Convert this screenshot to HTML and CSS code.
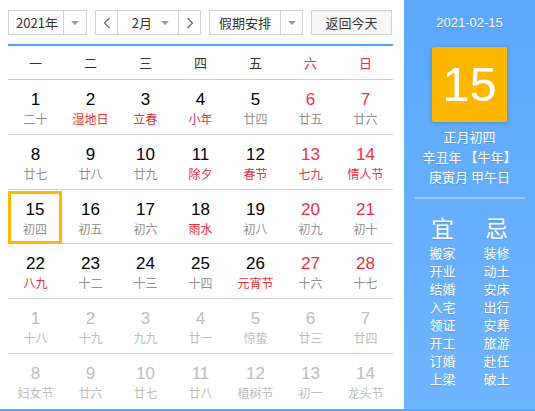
FILE: index.html
```html
<!DOCTYPE html>
<html lang="zh">
<head>
<meta charset="utf-8">
<link rel="stylesheet" href="styles.css">
</head>
<body>
<div class="widget">
  <div class="main">
    <div class="toolbar">
      <div class="select year"><span class="val">2021年</span><span class="drop"><i class="tri"></i></span></div>
      <div class="select month">
        <span class="nav"><svg width="8" height="12" viewBox="0 0 8 12"><path d="M6.5 1 L1.5 6 L6.5 11" fill="none" stroke="#666" stroke-width="1.2"/></svg></span>
        <span class="val">2月</span><span class="mdrop"><i class="tri"></i></span>
        <span class="nav next"><svg width="8" height="12" viewBox="0 0 8 12"><path d="M1.5 1 L6.5 6 L1.5 11" fill="none" stroke="#666" stroke-width="1.2"/></svg></span>
      </div>
      <div class="select holiday"><span class="val">假期安排</span><span class="drop"><i class="tri"></i></span></div>
      <div class="btn">返回今天</div>
    </div>
    <div class="weekhead">
      <span>一</span><span>二</span><span>三</span><span>四</span><span>五</span><span class="red">六</span><span class="red">日</span>
    </div>
    <div class="week">
      <div class="day"><b>1</b><em>二十</em></div>
      <div class="day"><b>2</b><em class="red">湿地日</em></div>
      <div class="day"><b>3</b><em class="red">立春</em></div>
      <div class="day"><b>4</b><em class="red">小年</em></div>
      <div class="day"><b>5</b><em>廿四</em></div>
      <div class="day"><b class="red">6</b><em>廿五</em></div>
      <div class="day"><b class="red">7</b><em>廿六</em></div>
    </div>
    <div class="week">
      <div class="day"><b>8</b><em>廿七</em></div>
      <div class="day"><b>9</b><em>廿八</em></div>
      <div class="day"><b>10</b><em>廿九</em></div>
      <div class="day"><b>11</b><em class="red">除夕</em></div>
      <div class="day"><b>12</b><em class="red">春节</em></div>
      <div class="day"><b class="red">13</b><em class="red">七九</em></div>
      <div class="day"><b class="red">14</b><em class="red">情人节</em></div>
    </div>
    <div class="week">
      <div class="day sel"><b>15</b><em>初四</em></div>
      <div class="day"><b>16</b><em>初五</em></div>
      <div class="day"><b>17</b><em>初六</em></div>
      <div class="day"><b>18</b><em class="red">雨水</em></div>
      <div class="day"><b>19</b><em>初八</em></div>
      <div class="day"><b class="red">20</b><em>初九</em></div>
      <div class="day"><b class="red">21</b><em>初十</em></div>
    </div>
    <div class="week">
      <div class="day"><b>22</b><em class="red">八九</em></div>
      <div class="day"><b>23</b><em>十二</em></div>
      <div class="day"><b>24</b><em>十三</em></div>
      <div class="day"><b>25</b><em>十四</em></div>
      <div class="day"><b>26</b><em class="red">元宵节</em></div>
      <div class="day"><b class="red">27</b><em>十六</em></div>
      <div class="day"><b class="red">28</b><em>十七</em></div>
    </div>
    <div class="week other">
      <div class="day"><b>1</b><em>十八</em></div>
      <div class="day"><b>2</b><em>十九</em></div>
      <div class="day"><b>3</b><em>九九</em></div>
      <div class="day"><b>4</b><em>廿一</em></div>
      <div class="day"><b>5</b><em>惊蛰</em></div>
      <div class="day"><b>6</b><em>廿三</em></div>
      <div class="day"><b>7</b><em>廿四</em></div>
    </div>
    <div class="week other last">
      <div class="day"><b>8</b><em>妇女节</em></div>
      <div class="day"><b>9</b><em>廿六</em></div>
      <div class="day"><b>10</b><em>廿七</em></div>
      <div class="day"><b>11</b><em>廿八</em></div>
      <div class="day"><b>12</b><em>植树节</em></div>
      <div class="day"><b>13</b><em>初一</em></div>
      <div class="day"><b>14</b><em>龙头节</em></div>
    </div>
  </div>
  <div class="panel">
    <div class="pdate">2021-02-15</div>
    <div class="bigday">15</div>
    <div class="lunar">
      <div>正月初四</div>
      <div>辛丑年 【牛年】</div>
      <div>庚寅月 甲午日</div>
    </div>
    <div class="sep"></div>
    <div class="yiji">
      <div class="col">
        <div class="head">宜</div>
        <div>搬家</div><div>开业</div><div>结婚</div><div>入宅</div><div>领证</div><div>开工</div><div>订婚</div><div>上梁</div>
      </div>
      <div class="col">
        <div class="head">忌</div>
        <div>装修</div><div>动土</div><div>安床</div><div>出行</div><div>安葬</div><div>旅游</div><div>赴任</div><div>破土</div>
      </div>
    </div>
  </div>
</div>
</body>
</html>
```

FILE: styles.css
```css
* { box-sizing: border-box; }
html, body { margin: 0; padding: 0; background: #fff; }
body {
  font-family: "Liberation Sans", "Noto Sans CJK SC", sans-serif;
  color: #333;
  width: 535px;
  height: 411px;
  overflow: hidden;
}
.widget {
  display: flex;
  height: 411px;
  border-bottom: 2px solid #5aa8fb;
}
.main {
  width: 393px;
  padding-left: 8px;
  display: flex;
  flex-direction: column;
}
.toolbar {
  display: flex;
  height: 46px;
  padding-top: 10px;
  border-bottom: 2px solid #4da3f8;
  gap: 8px;
}
.select, .btn {
  height: 25px;
  border: 1px solid #d2d2d2;
  display: flex;
  align-items: stretch;
  font-size: 13px;
  color: #333;
  font-family: "Noto Sans CJK SC", sans-serif;
}
.select .val { display: flex; align-items: center; justify-content: center; }
.drop {
  border-left: 1px solid #d2d2d2;
  display: flex; align-items: center; justify-content: center;
}
.tri {
  width: 0; height: 0;
  border-left: 4px solid transparent;
  border-right: 4px solid transparent;
  border-top: 4px solid #999;
}
.year { width: 79px; }
.year .val { width: 54px; padding-left: 2px; }
.year .drop { flex: 1; }
.month { width: 106px; }
.nav {
  width: 22px;
  display: flex; align-items: center; justify-content: center;
  border-right: 1px solid #d2d2d2;
}
.nav.next { border-right: 0; border-left: 1px solid #d2d2d2; }
.month .val { width: 34px; justify-content: flex-end; padding-right: 0; }
.mdrop { flex: 1; display: flex; align-items: center; justify-content: flex-end; padding-right: 9px; }
.holiday { width: 94px; }
.holiday .val { width: 70px; }
.holiday .drop { flex: 1; }
.btn {
  width: 81px;
  background: #f6f6f6;
  align-items: center;
  justify-content: center;
}
.weekhead {
  display: grid;
  grid-template-columns: repeat(7, 55px);
  height: 34px;
  border-bottom: 1px solid #cfcfcf;
  font-family: "Noto Sans CJK SC", sans-serif;
  font-size: 13px;
  color: #333;
}
.weekhead span { display: flex; align-items: center; justify-content: center; padding-top: 1px; }
.red { color: #f0313b !important; }
.week {
  display: grid;
  grid-template-columns: repeat(7, 55px);
  height: 55px;
  border-bottom: 1px solid #cfcfcf;
}
.week.last { border-bottom: 0; }
.day {
  display: flex;
  flex-direction: column;
  align-items: center;
  padding-top: 10px;
}
.day b {
  font-weight: normal;
  font-size: 17px;
  line-height: 20px;
  color: #000;
}
.day em {
  font-style: normal;
  font-family: "Noto Sans CJK SC", sans-serif;
  font-size: 12px;
  line-height: 18px;
  color: #8f8f8f;
}
.other .day b, .other .day em { color: #bdbdbd; }
.day.sel {
  box-shadow: inset 0 0 0 3px #ffb800;
  width: 54px;
  margin-top: 1px;
  padding-top: 9px;
  margin-bottom: -1px;
}
.panel {
  margin-left: 11px;
  width: 131px;
  background: linear-gradient(#5ba8fc, #6fb4fe);
  color: #fff;
  display: flex;
  flex-direction: column;
  align-items: center;
  font-family: "Noto Sans CJK SC", sans-serif;
  text-shadow: 0 1px 1px rgba(0, 40, 120, 0.15);
}
.pdate {
  font-family: "Liberation Sans", sans-serif;
  font-size: 13px;
  line-height: 16px;
  margin-top: 15px;
}
.bigday {
  width: 75px;
  height: 75px;
  margin-top: 16px;
  background: #ffb700;
  border-radius: 2px;
  box-shadow: 0 1px 4px rgba(0, 50, 140, 0.3);
  font-family: "Liberation Sans", sans-serif;
  font-size: 49px;
  line-height: 75px;
  text-align: center;
  text-shadow: none;
}
.lunar {
  margin-top: 5px;
  font-size: 13px;
  line-height: 20px;
  text-align: center;
}
.sep {
  width: 110px;
  height: 2px;
  margin-top: 10px;
  background: rgba(255, 255, 255, 0.35);
}
.yiji {
  display: flex;
  gap: 28px;
  margin-top: 14px;
}
.col {
  display: flex;
  flex-direction: column;
  align-items: center;
  font-size: 13px;
  line-height: 18px;
}
.col .head {
  font-size: 23px;
  line-height: 28px;
  margin-bottom: 3px;
}
```
